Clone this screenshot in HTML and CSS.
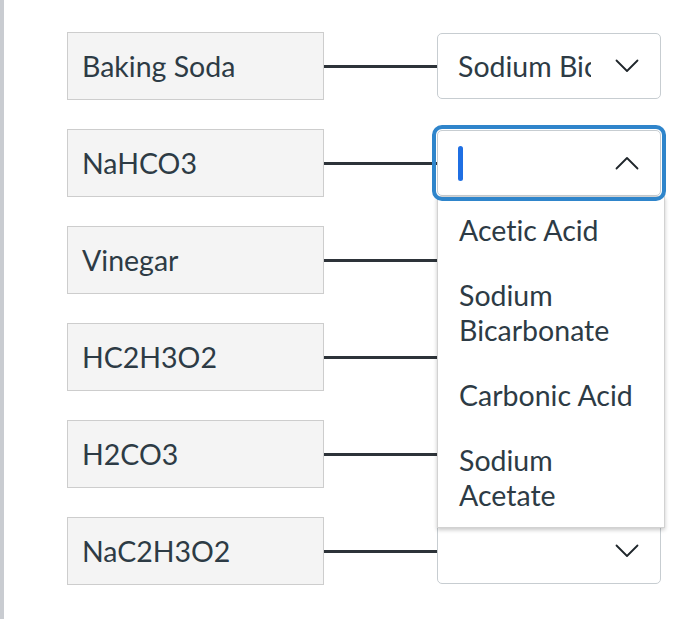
FILE: index.html
```html
<!DOCTYPE html>
<html lang="en">
<head>
<meta charset="utf-8">
<title>Matching</title>
<link rel="stylesheet" href="styles.css">
</head>
<body>
<div class="page">
  <div class="rail"></div>
  <main class="matching">
    <div class="row">
      <div class="term">Baking Soda</div>
      <div class="link"></div>
      <div class="select">
        <span class="value">Sodium Bicarbonate</span>
        <svg class="chev" viewBox="0 0 24 14" aria-hidden="true"><polyline points="1.5,1.5 12,12 22.5,1.5"/></svg>
      </div>
    </div>
    <div class="row">
      <div class="term">NaHCO3</div>
      <div class="link"></div>
      <div class="select is-open">
        <span class="value"><span class="caret"></span></span>
        <svg class="chev" viewBox="0 0 24 14" aria-hidden="true"><polyline points="1.5,12.5 12,2 22.5,12.5"/></svg>
        <ul class="listbox">
          <li>Acetic Acid</li>
          <li>Sodium Bicarbonate</li>
          <li>Carbonic Acid</li>
          <li>Sodium Acetate</li>
        </ul>
      </div>
    </div>
    <div class="row">
      <div class="term">Vinegar</div>
      <div class="link"></div>
      <div class="select">
        <span class="value"></span>
        <svg class="chev" viewBox="0 0 24 14" aria-hidden="true"><polyline points="1.5,1.5 12,12 22.5,1.5"/></svg>
      </div>
    </div>
    <div class="row">
      <div class="term">HC2H3O2</div>
      <div class="link"></div>
      <div class="select">
        <span class="value"></span>
        <svg class="chev" viewBox="0 0 24 14" aria-hidden="true"><polyline points="1.5,1.5 12,12 22.5,1.5"/></svg>
      </div>
    </div>
    <div class="row">
      <div class="term">H2CO3</div>
      <div class="link"></div>
      <div class="select">
        <span class="value"></span>
        <svg class="chev" viewBox="0 0 24 14" aria-hidden="true"><polyline points="1.5,1.5 12,12 22.5,1.5"/></svg>
      </div>
    </div>
    <div class="row">
      <div class="term">NaC2H3O2</div>
      <div class="link"></div>
      <div class="select">
        <span class="value"></span>
        <svg class="chev" viewBox="0 0 24 14" aria-hidden="true"><polyline points="1.5,1.5 12,12 22.5,1.5"/></svg>
      </div>
    </div>
  </main>
</div>
</body>
</html>
```

FILE: styles.css
```css
* { box-sizing: border-box; }

html, body {
  margin: 0;
  padding: 0;
  background: #ffffff;
}

body {
  font-family: Lato, "Open Sans", "Liberation Sans", sans-serif;
  font-size: 28.5px;
  font-variant-ligatures: none;
  color: #2d3b45;
}

.page {
  display: flex;
  height: 619px;
  overflow: hidden;
}

.rail {
  width: 4px;
  flex: none;
  background: #c9ccd1;
}

.matching {
  padding: 32px 0 0 63px;
  display: flex;
  flex-direction: column;
  gap: 29px;
}

.row {
  display: flex;
  align-items: center;
  height: 68px;
}

.term {
  width: 257px;
  height: 68px;
  flex: none;
  background: #f4f4f4;
  border: 1px solid #cdcdcd;
  display: flex;
  align-items: center;
  padding-left: 14px;
  white-space: nowrap;
}

.link {
  width: 113px;
  height: 3px;
  flex: none;
  background: #2d3339;
}

.select {
  position: relative;
  width: 224px;
  height: 66px;
  flex: none;
  border: 1px solid #c7cdd1;
  border-radius: 5px;
  background: #fff;
  display: flex;
  align-items: center;
  padding: 0 21px 0 20px;
}

.value {
  width: 133px;
  flex: none;
  overflow: hidden;
  white-space: nowrap;
  display: flex;
  align-items: center;
}

.chev {
  width: 24px;
  height: 14px;
  margin-left: auto;
  flex: none;
}

.chev polyline {
  fill: none;
  stroke: #1f262b;
  stroke-width: 1.8;
  stroke-linecap: round;
  stroke-linejoin: round;
}

.select.is-open {
  outline: 4px solid #2f85cb;
  outline-offset: 1px;
  z-index: 2;
}

.caret {
  display: block;
  width: 5px;
  height: 35px;
  border-radius: 3px;
  background: #1f6fe3;
}

.listbox {
  position: absolute;
  left: -1px;
  top: calc(100% + 1px);
  width: 228px;
  margin: 0;
  padding: 0;
  list-style: none;
  background: #fff;
  border: 1px solid #d2d2d2;
  box-shadow: 0 2px 4px rgba(0, 0, 0, 0.22);
  z-index: -1;
}

.listbox li {
  padding: 16px 18px 14px 21px;
  line-height: 35px;
}
```
